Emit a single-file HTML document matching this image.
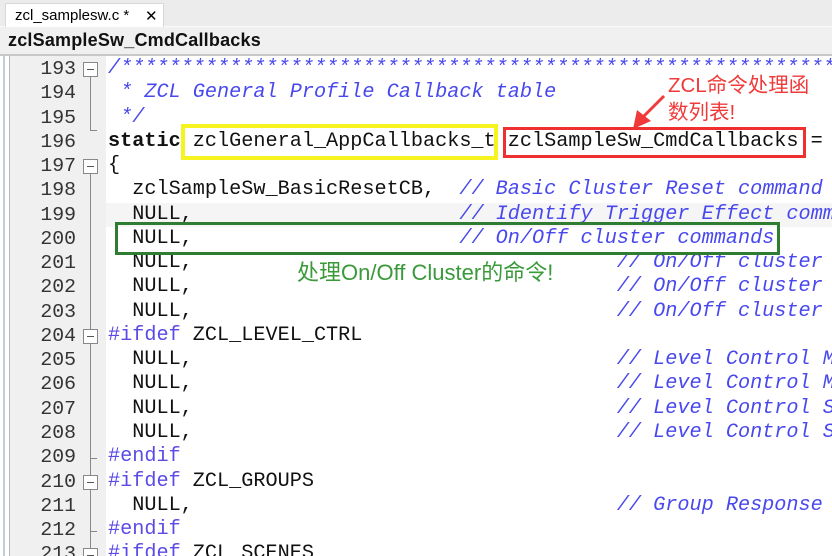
<!DOCTYPE html>
<html><head><meta charset="utf-8"><style>
html,body{margin:0;padding:0;width:832px;height:556px;overflow:hidden;background:#fff;position:relative}
.tabbar{position:absolute;left:0;top:0;width:832px;height:26px;background:#ececec;border-bottom:1px solid #fafafa}
.tab{position:absolute;left:5px;top:3px;width:157px;height:24px;background:#fff;border:1px solid #d8d8d8;border-bottom:none;font:15px "Liberation Sans",sans-serif;color:#000}
.tab span{position:absolute;left:9px;top:3px}
.tab b{position:absolute;left:139px;top:3px;font-weight:normal;font-size:15px}
.title{position:absolute;left:0;top:27px;width:832px;height:27px;background:#f0f0f0;border-bottom:2px solid #c8c8c8;font:bold 18px "Liberation Sans",sans-serif;color:#111}
.title span{position:absolute;left:8px;top:3px;letter-spacing:0.2px}
.lb{position:absolute;left:3px;top:56px;width:2px;height:500px;background:#c5cbd8}
.gut{position:absolute;left:9px;top:56px;width:96px;height:500px;background:#f0f0f0;border-left:1px solid #b8b8b8}
.num{position:absolute;left:0;top:57px;width:76px;text-align:right;font:19.8px/24.27px "Liberation Mono",monospace;color:#333;white-space:pre}
.code{position:absolute;left:108px;top:57px;font:20.2px/24.27px "Liberation Mono",monospace;color:#111;white-space:pre}
.c{color:#4848ee;font-style:italic}
.p{color:#5a4ae6}
.k{font-weight:bold;color:#111}
.hl{position:absolute;left:106px;top:203px;width:726px;height:24px;background:#f5f5f5}
.fb{position:absolute;left:83px;width:13px;height:13px;border:1px solid #888;background:#fff}
.fb:after{content:"";position:absolute;left:3px;top:6px;width:7px;height:1px;background:#555}
.vl{position:absolute;left:90px;width:1px;background:#888}
.tk{position:absolute;left:90px;width:7px;height:1px;background:#888}
.box{position:absolute;box-sizing:border-box}
</style></head><body>
<div class="tabbar"><div class="tab"><span>zcl_samplesw.c *</span><b>✕</b></div></div>
<div class="title"><span>zclSampleSw_CmdCallbacks</span></div>
<div class="lb"></div>
<div class="gut"></div>
<div class="hl"></div>
<div class="num">193
194
195
196
197
198
199
200
201
202
203
204
205
206
207
208
209
210
211
212
213</div>
<div class="vl" style="top:75px;height:56px"></div>
<div class="tk" style="top:130px"></div>
<div class="vl" style="top:172px;height:384px"></div>
<div class="tk" style="top:458px"></div>
<div class="tk" style="top:531px"></div>
<div class="fb" style="top:62px"></div>
<div class="fb" style="top:159px"></div>
<div class="fb" style="top:329px"></div>
<div class="fb" style="top:475px"></div>
<div class="fb" style="top:548px"></div>
<div class="code"><span class="c">/************************************************************</span>
<span class="c"> * ZCL General Profile Callback table</span>
<span class="c"> */</span>
<span class="k">static</span> zclGeneral_AppCallbacks_t zclSampleSw_CmdCallbacks =
{
  zclSampleSw_BasicResetCB,  <span class="c">// Basic Cluster Reset command</span>
  NULL,                      <span class="c">// Identify Trigger Effect command</span>
  NULL,                      <span class="c">// On/Off cluster commands</span>
  NULL,                                   <span class="c">// On/Off cluster</span>
  NULL,                                   <span class="c">// On/Off cluster</span>
  NULL,                                   <span class="c">// On/Off cluster</span>
<span class="p">#ifdef</span> ZCL_LEVEL_CTRL
  NULL,                                   <span class="c">// Level Control Move</span>
  NULL,                                   <span class="c">// Level Control Move</span>
  NULL,                                   <span class="c">// Level Control Step</span>
  NULL,                                   <span class="c">// Level Control Step</span>
<span class="p">#endif</span>
<span class="p">#ifdef</span> ZCL_GROUPS
  NULL,                                   <span class="c">// Group Response</span>
<span class="p">#endif</span>
<span class="p">#ifdef</span> ZCL_SCENES</div>
<div class="box" style="left:181px;top:124px;width:317px;height:36px;border:4px solid #f7f31e"></div>
<div class="box" style="left:503px;top:127px;width:303px;height:31px;border:3px solid #ee3030"></div>
<div class="box" style="left:115px;top:222px;width:665px;height:33px;border:3px solid #2e7d32"></div>
<div style="position:absolute;left:668px;top:72px;font:20.5px/27px 'Liberation Sans','Noto Sans CJK SC',sans-serif;color:#f03a3a">ZCL命令处理函<br>数列表!</div>
<svg style="position:absolute;left:0;top:0" width="832" height="556"><line x1="664" y1="96" x2="642" y2="118" stroke="#f03a3a" stroke-width="3"/><polygon points="633,129 637,110 651,121" fill="#f03a3a"/></svg>
<div style="position:absolute;left:297px;top:259px;font:22px/28px 'Liberation Sans','Noto Sans CJK SC',sans-serif;color:#3a9a3a">处理On/Off Cluster的命令!</div>
</body></html>
